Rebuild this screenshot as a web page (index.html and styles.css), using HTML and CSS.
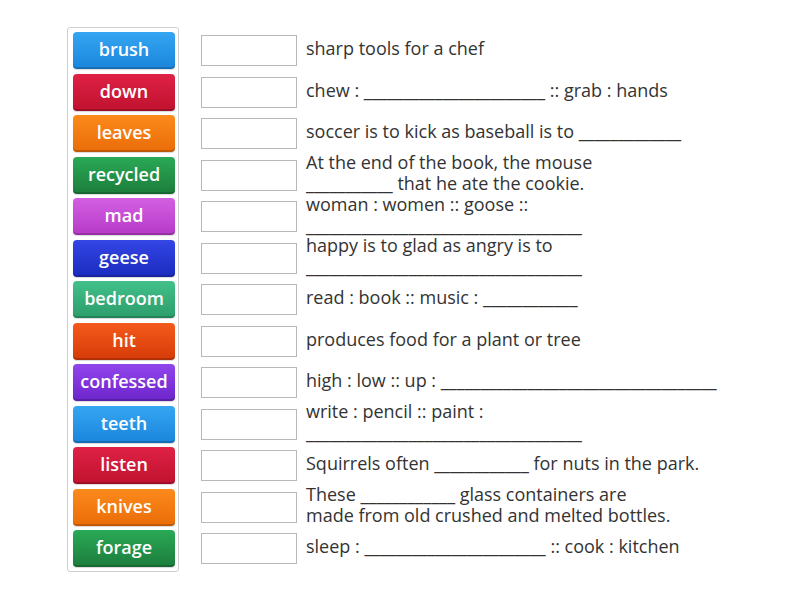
FILE: index.html
```html
<!DOCTYPE html>
<html lang="en">
<head>
<meta charset="utf-8">
<title>Match up</title>
<link rel="stylesheet" href="styles.css">
</head>
<body>
<div class="page">
  <div class="bank">
    <div class="tile blue">brush</div>
    <div class="tile red">down</div>
    <div class="tile orange">leaves</div>
    <div class="tile green">recycled</div>
    <div class="tile magenta">mad</div>
    <div class="tile navy">geese</div>
    <div class="tile teal">bedroom</div>
    <div class="tile vermilion">hit</div>
    <div class="tile purple">confessed</div>
    <div class="tile blue">teeth</div>
    <div class="tile red">listen</div>
    <div class="tile orange">knives</div>
    <div class="tile green">forage</div>
  </div>
  <div class="rows">
    <div class="row"><div class="slot"></div><div class="clue">sharp tools for a chef</div></div>
    <div class="row"><div class="slot"></div><div class="clue">chew : _______________________ :: grab : hands</div></div>
    <div class="row"><div class="slot"></div><div class="clue">soccer is to kick as baseball is to _____________</div></div>
    <div class="row"><div class="slot"></div><div class="clue">At the end of the book, the mouse<br>___________ that he ate the cookie.</div></div>
    <div class="row"><div class="slot"></div><div class="clue">woman : women :: goose ::<br>___________________________________</div></div>
    <div class="row"><div class="slot"></div><div class="clue">happy is to glad as angry is to<br>___________________________________</div></div>
    <div class="row"><div class="slot"></div><div class="clue">read : book :: music : ____________</div></div>
    <div class="row"><div class="slot"></div><div class="clue">produces food for a plant or tree</div></div>
    <div class="row"><div class="slot"></div><div class="clue">high : low :: up : ___________________________________</div></div>
    <div class="row"><div class="slot"></div><div class="clue">write : pencil :: paint :<br>___________________________________</div></div>
    <div class="row"><div class="slot"></div><div class="clue">Squirrels often ____________ for nuts in the park.</div></div>
    <div class="row"><div class="slot"></div><div class="clue">These ____________ glass containers are<br>made from old crushed and melted bottles.</div></div>
    <div class="row"><div class="slot"></div><div class="clue">sleep : _______________________ :: cook : kitchen</div></div>
  </div>
</div>
</body>
</html>
```

FILE: styles.css
```css
html, body {
  margin: 0;
  padding: 0;
  background: #ffffff;
}

.page {
  display: flex;
  align-items: flex-start;
  padding: 27px 0 0 67px;
  font-family: "Open Sans", Lato, sans-serif;
}

.bank {
  display: flex;
  flex-direction: column;
  gap: 4.5px;
  padding: 4px 3px 4px 5px;
  border: 1px solid #cfcfcf;
  border-radius: 3px;
}

.tile {
  width: 102px;
  height: 37px;
  line-height: 35px;
  border-radius: 4px;
  color: #ffffff;
  font-weight: 600;
  font-size: 18px;
  text-align: center;
  box-sizing: border-box;
  box-shadow: inset 0 -2px 0 rgba(0, 0, 0, 0.18), 0 1px 1px rgba(0, 0, 0, 0.15);
}

.blue { background: linear-gradient(#35a6f2, #1a85dc); }
.red { background: linear-gradient(#df2145, #c0122f); }
.orange { background: linear-gradient(#fc8a1c, #ea6c08); }
.green { background: linear-gradient(#2aa956, #1c7d3c); }
.magenta { background: linear-gradient(#d35fe2, #b63ac8); }
.navy { background: linear-gradient(#3446e4, #1a2bbf); }
.teal { background: linear-gradient(#43c08b, #2b9d6b); }
.vermilion { background: linear-gradient(#f45a1c, #d63b08); }
.purple { background: linear-gradient(#9146ec, #6c25cb); }

.rows {
  display: flex;
  flex-direction: column;
  margin-top: 2.75px;
}

.row {
  display: flex;
  align-items: center;
  height: 41.5px;
}

.slot {
  width: 96px;
  height: 31px;
  box-sizing: border-box;
  border: 1px solid #b8b8b8;
  background: #ffffff;
  margin-left: 22px;
  flex: none;
}

.clue {
  margin-left: 9px;
  font-size: 18px;
  line-height: 21px;
  color: #333333;
  white-space: nowrap;
  position: relative;
  top: -2px;
}
```
